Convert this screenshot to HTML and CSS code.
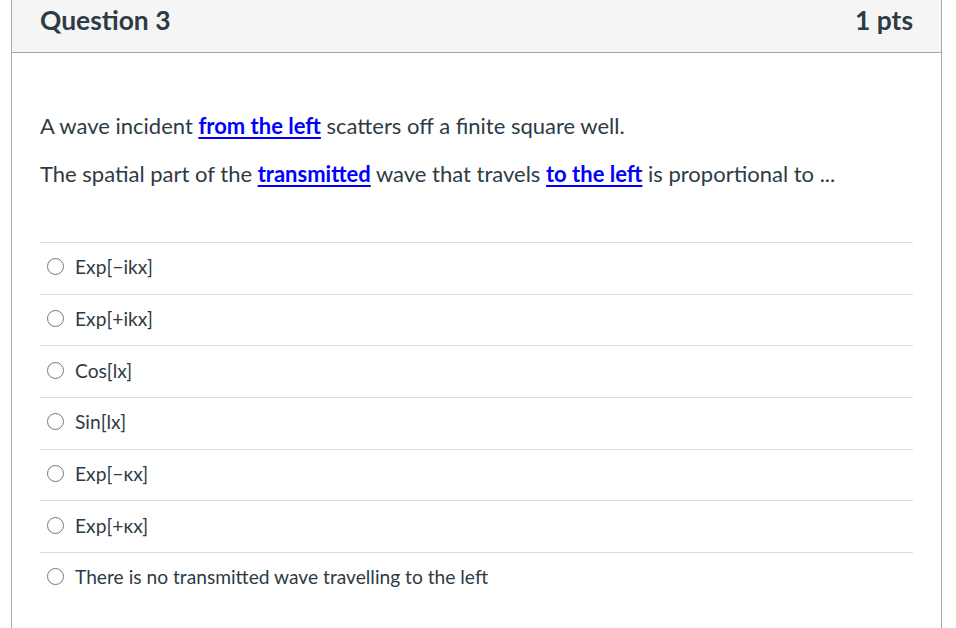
FILE: index.html
```html
<!DOCTYPE html>
<html>
<head>
<meta charset="utf-8">
<link rel="stylesheet" href="styles.css">
</head>
<body>
<div class="question">
  <div class="header">
    <span class="title">Question 3</span>
    <span class="pts">1 pts</span>
  </div>
  <div class="content">
    <p class="text">A wave incident <a class="lnk">from the left</a> scatters off a ﬁnite square well.</p>
    <p class="text">The spatial part of the <a class="lnk">transmitted</a> wave that travels <a class="lnk">to the left</a> is proportional to ...</p>
    <div class="answers">
      <label class="answer"><span class="radio"></span><span>Exp[−ikx]</span></label>
      <label class="answer"><span class="radio"></span><span>Exp[+ikx]</span></label>
      <label class="answer"><span class="radio"></span><span>Cos[lx]</span></label>
      <label class="answer"><span class="radio"></span><span>Sin[lx]</span></label>
      <label class="answer"><span class="radio"></span><span>Exp[−κx]</span></label>
      <label class="answer"><span class="radio"></span><span>Exp[+κx]</span></label>
      <label class="answer"><span class="radio"></span><span>There is no transmitted wave travelling to the left</span></label>
    </div>
  </div>
</div>
</body>
</html>
```
FILE: styles.css
```css
html, body {
  margin: 0;
  padding: 0;
  background: #ffffff;
  font-family: Lato, "Noto Sans", sans-serif;
  color: #2d3b45;
}
.question {
  margin-left: 11px;
  width: 929px;
  height: 628px;
  border-left: 1px solid #a8a8a8;
  border-right: 1px solid #a8a8a8;
}
.header {
  background: #f5f5f5;
  border-bottom: 1px solid #a8a8a8;
  display: flex;
  justify-content: space-between;
  align-items: center;
  padding: 0 28px 12px 28px;
  box-sizing: border-box;
  height: 53px;
}
.title, .pts {
  font-weight: 700;
  font-size: 26.4px;
  color: #2d3b45;
}
.content {
  padding: 0 28px;
}
.text {
  margin: 0;
  font-size: 22px;
  line-height: 30px;
}
.text:first-child {
  padding-top: 58px;
}
.text + .text {
  margin-top: 18px;
}
.lnk {
  color: #0000ff;
  font-weight: 700;
  text-decoration: underline;
  text-decoration-thickness: 2px;
  text-underline-offset: 3px;
}
.answers {
  margin-top: 53px;
}
.answer {
  display: flex;
  align-items: center;
  box-sizing: border-box;
  height: 51.67px;
  border-top: 1px solid #dcdcdc;
  font-size: 19.2px;
  padding-left: 7px;
  padding-bottom: 3px;
}
.radio {
  width: 15px;
  height: 15px;
  border: 1px solid #777;
  border-radius: 50%;
  margin-right: 11px;
  flex: none;
}
```
